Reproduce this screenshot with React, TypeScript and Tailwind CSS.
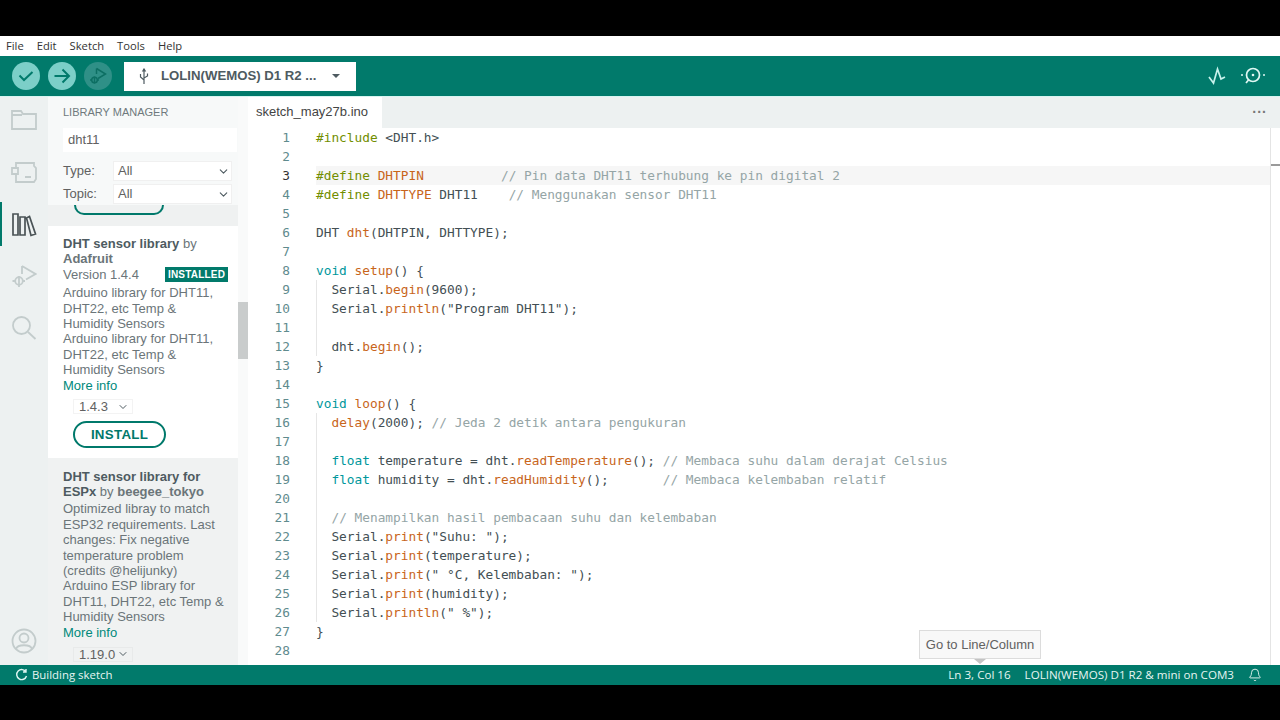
import { ChevronDown, Bell } from "lucide-react";

const C = {
  k: "text-[#728e00]",
  f: "text-[#c8651b]",
  t: "text-[#00979c]",
  c: "text-[#95a5a6]",
  s: "text-[#434f54]",
};

type Tok = [string, string?];

const code: Tok[][] = [
  [["#include", C.k], [" <DHT.h>", C.s]],
  [],
  [["#define", C.k], [" "], ["DHTPIN", C.f], ["          "], ["// Pin data DHT11 terhubung ke pin digital 2", C.c]],
  [["#define", C.k], [" "], ["DHTTYPE", C.f], [" DHT11    "], ["// Menggunakan sensor DHT11", C.c]],
  [],
  [["DHT "], ["dht", C.f], ["(DHTPIN, DHTTYPE);"]],
  [],
  [["void", C.t], [" "], ["setup", C.f], ["() {"]],
  [["  Serial."], ["begin", C.f], ["(9600);"]],
  [["  Serial."], ["println", C.f], ["(\"Program DHT11\");", C.s]],
  [],
  [["  dht."], ["begin", C.f], ["();"]],
  [["}"]],
  [],
  [["void", C.t], [" "], ["loop", C.f], ["() {"]],
  [["  "], ["delay", C.f], ["(2000); "], ["// Jeda 2 detik antara pengukuran", C.c]],
  [],
  [["  "], ["float", C.t], [" temperature = dht."], ["readTemperature", C.f], ["(); "], ["// Membaca suhu dalam derajat Celsius", C.c]],
  [["  "], ["float", C.t], [" humidity = dht."], ["readHumidity", C.f], ["();       "], ["// Membaca kelembaban relatif", C.c]],
  [],
  [["  "], ["// Menampilkan hasil pembacaan suhu dan kelembaban", C.c]],
  [["  Serial."], ["print", C.f], ["(\"Suhu: \");"]],
  [["  Serial."], ["print", C.f], ["(temperature);"]],
  [["  Serial."], ["print", C.f], ["(\" °C, Kelembaban: \");"]],
  [["  Serial."], ["print", C.f], ["(humidity);"]],
  [["  Serial."], ["println", C.f], ["(\" %\");"]],
  [["}"]],
  [],
];

function RailIcon({ active, children }: { active?: boolean; children: React.ReactNode }) {
  return (
    <div className="relative flex h-12 w-12 items-center justify-center">
      {active && <div className="absolute top-[2px] bottom-[2px] left-0 w-[2px] bg-[#017a6b]" />}
      {children}
    </div>
  );
}

function Filter({ label, mt }: { label: string; mt: string }) {
  return (
    <div className={`flex items-center ${mt}`}>
      <span className="w-[50px] text-[13px] text-[#616161]">{label}</span>
      <div className="flex h-[20px] w-[119px] items-center justify-between border border-[#f0f0f0] bg-white pr-[1px] pl-[4px] text-[13px] text-[#616161]">
        All
        <ChevronDown size={13} strokeWidth={2} className="text-[#4e5b61]" />
      </div>
    </div>
  );
}

export default function App() {
  return (
    <div
      className="flex h-[720px] w-[1280px] flex-col overflow-hidden bg-black text-[#4e5b61]"
      style={{ fontFamily: '"Liberation Sans", Arial, sans-serif' }}
    >
      <div className="h-9 shrink-0 bg-black" />

      {/* Menu */}
      <div className="flex h-5 shrink-0 items-center gap-[13px] bg-white pl-[6px] text-[11.2px] text-[#333] [font-family:'Open_Sans',sans-serif]">
        <span>File</span>
        <span>Edit</span>
        <span>Sketch</span>
        <span>Tools</span>
        <span>Help</span>
      </div>

      {/* Toolbar */}
      <div className="flex h-10 shrink-0 items-center justify-between bg-[#017a6b] pr-[14px] pl-3">
        <div className="flex items-center">
          <div className="flex h-7 w-7 items-center justify-center rounded-full bg-[#7ccfc8]">
            <svg width="18" height="14" viewBox="0 0 18 14" fill="none" stroke="#017a6b" strokeWidth="2">
              <path d="M2.5 6.5 L7 11 L15.5 3" />
            </svg>
          </div>
          <div className="ml-2 flex h-7 w-7 items-center justify-center rounded-full bg-[#7ccfc8]">
            <svg width="18" height="16" viewBox="0 0 18 16" fill="none" stroke="#017a6b" strokeWidth="2">
              <path d="M1.5 8 H16 M9.5 1.5 L16 8 L9.5 14.5" />
            </svg>
          </div>
          <div className="ml-2 flex h-7 w-7 items-center justify-center rounded-full bg-[#2f9087]">
            <svg width="20" height="20" viewBox="0 0 20 20" fill="none" stroke="#0d6f63" strokeWidth="1.5">
              <path d="M8.5 2.5 L17.5 8 L10 12.5 M8.5 2.5 V8" />
              <circle cx="6.5" cy="14" r="2.8" />
              <path d="M6.5 10.5 V17.5 M2 14 H3.7 M9.3 14 H11" />
            </svg>
          </div>
          <div className="ml-[12px] flex h-[29px] w-[232px] items-center bg-white pl-[14px] text-[#4e5b61]">
            <svg width="12" height="17" viewBox="0 0 12 17" fill="none" stroke="#4e5b61" strokeWidth="1.2">
              <path d="M6 1 V16 M6 12 L2.5 9 V6 M6 10 L9.5 8 V5.5" />
              <path d="M4.8 3 L6 1 L7.2 3 Z" fill="#4e5b61" />
            </svg>
            <span className="ml-[11px] text-[13.2px] font-bold whitespace-pre">LOLIN(WEMOS) D1 R2 ...</span>
            <span className="ml-[16px] h-0 w-0 border-x-[4px] border-t-[4px] border-x-transparent border-t-[#4e5b61]" />
          </div>
        </div>
        <div className="flex items-center gap-[13px]">
          <svg width="20" height="20" viewBox="0 0 20 20" fill="none" stroke="#c8f2ec" strokeWidth="1.7">
            <path d="M2 11 L6.5 17 L10.5 3 L14 13 L18 11" />
          </svg>
          <svg width="26" height="20" viewBox="0 0 26 20" fill="none" stroke="#e0f7f3" strokeWidth="1.7">
            <circle cx="13" cy="9" r="6.5" />
            <circle cx="13" cy="9" r="1.3" fill="#e0f7f3" stroke="none" />
            <path d="M8.5 14 L6 17 M1 9 H3 M23 9 H25" />
          </svg>
        </div>
      </div>

      {/* Body */}
      <div className="flex min-h-0 flex-1 border-t border-[#d8f5f1] bg-[#edf1f1]">
        {/* Rail */}
        <div className="flex w-12 shrink-0 flex-col justify-between">
          <div className="-mt-px flex flex-col gap-1">
            <RailIcon>
              <svg width="28" height="24" viewBox="0 0 28 24" fill="none" stroke="#c3cccc" strokeWidth="1.8">
                <path d="M2 21 V3 H11 L13 6 H26 V21 Z M2 7 H12" />
              </svg>
            </RailIcon>
            <RailIcon>
              <svg width="28" height="24" viewBox="0 0 28 24" fill="none" stroke="#c3cccc" strokeWidth="1.8">
                <path d="M6 8 V3 H24 V6 L26 8 V19 L24 22 H6 V14 M2 8 H8 V14 H2 Z M15 17 H21" />
              </svg>
            </RailIcon>
            <RailIcon active>
              <svg width="26" height="26" viewBox="0 0 26 26" fill="none" stroke="#4a5356" strokeWidth="1.7">
                <path d="M2 3 H7 V24 H2 Z M9 6 H14 V24 H9 Z M15.5 7 L18.5 5.5 L24.5 23 L20 24.5 Z" />
              </svg>
            </RailIcon>
            <RailIcon>
              <svg width="26" height="26" viewBox="0 0 26 26" fill="none" stroke="#c3cccc" strokeWidth="1.8">
                <path d="M11 3 L24.5 11 L15 16.5 M11 3 V11" />
                <circle cx="8" cy="18" r="3.8" />
                <path d="M8 13 V24 M1.5 18 H4 M12 18 H14" />
              </svg>
            </RailIcon>
            <RailIcon>
              <svg width="26" height="26" viewBox="0 0 26 26" fill="none" stroke="#c3cccc" strokeWidth="1.8">
                <circle cx="10.5" cy="10.5" r="8.5" />
                <path d="M17 17 L24.5 24" />
              </svg>
            </RailIcon>
          </div>
          <RailIcon>
            <svg width="26" height="26" viewBox="0 0 26 26" fill="none" stroke="#c3cccc" strokeWidth="1.8">
              <circle cx="13" cy="13" r="11.5" />
              <circle cx="13" cy="10" r="4.5" />
              <path d="M5 21 C6.5 16 19.5 16 21 21" />
            </svg>
          </RailIcon>
        </div>

        {/* Library manager */}
        <div className="flex w-[190px] shrink-0 flex-col overflow-hidden bg-[#f7f9f9]">
          <div className="pt-[8px] pl-[15px] text-[11px] leading-[14px] text-[#6f797d]">LIBRARY MANAGER</div>
          <div className="mt-[9px] ml-[15px] flex h-6 w-[174px] items-center bg-white pl-[5px] text-[13px] text-[#616161]">dht11</div>
          <div className="pl-[15px]">
            <Filter label="Type:" mt="mt-[9px]" />
            <Filter label="Topic:" mt="mt-[3px]" />
          </div>

          <div className="mt-px min-h-0 flex-1 overflow-hidden">
            <div className="h-[21px] bg-[#eff1f1] pl-[26px]">
              <div className="h-[10px] w-[90px] rounded-b-[10px] border-x-2 border-b-2 border-[#00796b]" />
            </div>

            {/* Card 1 */}
            <div className="h-[232px] bg-white pt-[10px] pl-[15px] text-[13px] leading-[15.4px] text-[#6b7579]">
              <div className="w-[160px]">
                <b className="text-[#4e5b61]">DHT sensor library</b> by <b className="text-[#6b7579]">Adafruit</b>
              </div>
              <div className="mb-[3px] flex items-center justify-between pr-[10px]">
                <span>Version 1.4.4</span>
                <span className="flex h-[15px] w-[63px] items-center justify-center bg-[#017a6b] text-[10px] font-bold tracking-[0.2px] text-white">INSTALLED</span>
              </div>
              <div className="w-[160px]">Arduino library for DHT11, DHT22, etc Temp &amp; Humidity Sensors</div>
              <div className="w-[160px]">Arduino library for DHT11, DHT22, etc Temp &amp; Humidity Sensors</div>
              <div className="text-[#00897b]">More info</div>
              <div className="mt-[6px] ml-[10px] flex h-[15px] w-[60px] items-center justify-between border border-[#f3f3f3] pr-[3px] pl-[5px] text-[#616161]">
                1.4.3
                <ChevronDown size={12} strokeWidth={2} className="text-[#4e5b61]" />
              </div>
              <div className="mt-[7px] ml-[10px] flex h-[27px] w-[93px] items-center justify-center rounded-full border-2 border-[#00796b] text-[13.3px] font-bold tracking-[0.3px] text-[#00796b]">
                INSTALL
              </div>
            </div>

            {/* Card 2 */}
            <div className="h-[220px] bg-[#f0f2f2] pt-[11px] pl-[15px] text-[13px] leading-[15.4px] text-[#6b7579]">
              <div className="mb-[1.5px] w-[165px]">
                <b className="text-[#4e5b61]">DHT sensor library for ESPx</b> by <b>beegee_tokyo</b>
              </div>
              <div className="w-[165px]">Optimized libray to match ESP32 requirements. Last changes: Fix negative temperature problem (credits @helijunky)</div>
              <div className="w-[165px]">Arduino ESP library for DHT11, DHT22, etc Temp &amp; Humidity Sensors</div>
              <div className="text-[#00897b]">More info</div>
              <div className="mt-[7px] ml-[10px] flex h-[15px] w-[60px] items-center justify-between border border-[#e8eaea] pr-[3px] pl-[5px] text-[#616161]">
                1.19.0
                <ChevronDown size={12} strokeWidth={2} className="text-[#4e5b61]" />
              </div>
            </div>
          </div>
        </div>

        {/* Sidebar scrollbar */}
        <div className="w-[10px] shrink-0 bg-[#f9fafa] pt-[205px]">
          <div className="h-[57px] bg-[#c9cccc]" />
        </div>

        {/* Editor */}
        <div className="relative flex min-w-0 flex-1 flex-col bg-white">
          <div className="flex h-[31px] shrink-0 items-center justify-between bg-[#edf1f1]">
            <div className="flex h-full w-[134px] items-center bg-white pb-[2px] pl-2 text-[13px] text-[#444]">sketch_may27b.ino</div>
            <div className="pr-[13px] pb-[9px] text-[14px] leading-none font-bold tracking-[1px] text-[#777]">...</div>
          </div>
          <div className="flex min-h-0 flex-1 overflow-hidden">
            <div className="min-w-0 flex-1 text-[12.8px] leading-[19px] [font-family:'DejaVu_Sans_Mono',monospace]">
              {code.map((line, i) => {
                const indented = line.length > 0 && line[0][0].startsWith("  ");
                return (
                  <div key={i} className="flex h-[19px]">
                    <div className={`w-[42px] shrink-0 text-right ${i === 2 ? "text-[#333]" : "text-[#5f8b8e]"}`}>{i + 1}</div>
                    <div className={`ml-[26px] flex-1 whitespace-pre text-[#434f54] ${i === 2 ? "bg-[#f6f6f6]" : ""} ${indented || (i > 7 && i < 12) || (i > 14 && i < 26) ? "shadow-[inset_1px_0_0_#e6e6e6]" : ""}`}>
                      {line.map((t, j) => (
                        <span key={j} className={t[1]}>{t[0]}</span>
                      ))}
                    </div>
                  </div>
                );
              })}
            </div>
            <div className="w-[10px] shrink-0 border-l border-[#e4e4e4] pt-[36px]">
              <div className="h-[2px] bg-[#9a9a9a]" />
            </div>
          </div>

          {/* Tooltip */}
          <div className="absolute top-[533px] left-[671px] flex h-[29px] w-[122px] items-center justify-center border border-[#dcdcdc] bg-[#f8f8f8] text-[13px] text-[#616161]">
            Go to Line/Column
            <div className="absolute -bottom-[6px] left-[54px] h-0 w-0 border-x-[6px] border-t-[5px] border-x-transparent border-t-[#c4c4c4]" />
          </div>
        </div>
      </div>

      {/* Status bar */}
      <div className="flex h-5 shrink-0 items-center justify-between bg-[#017a6b] pr-[18px] pl-[15px] text-[#e6f5f2] [font-family:'Open_Sans',sans-serif]">
        <div className="flex items-center gap-1 text-[11.4px]">
          <svg width="13" height="13" viewBox="0 0 13 13" fill="none" stroke="#dff6f2" strokeWidth="1.4">
            <path d="M11 4 A5 5 0 1 0 11.5 8 M11 1 V4 H8" />
          </svg>
          <span>Building sketch</span>
        </div>
        <div className="flex items-center text-[11.6px]">
          <span>Ln 3, Col 16</span>
          <span className="ml-[14px]">LOLIN(WEMOS) D1 R2 &amp; mini on COM3</span>
          <Bell size={14} strokeWidth={1.6} className="ml-[14px]" />
        </div>
      </div>

      <div className="h-[35px] shrink-0 bg-black" />
    </div>
  );
}
